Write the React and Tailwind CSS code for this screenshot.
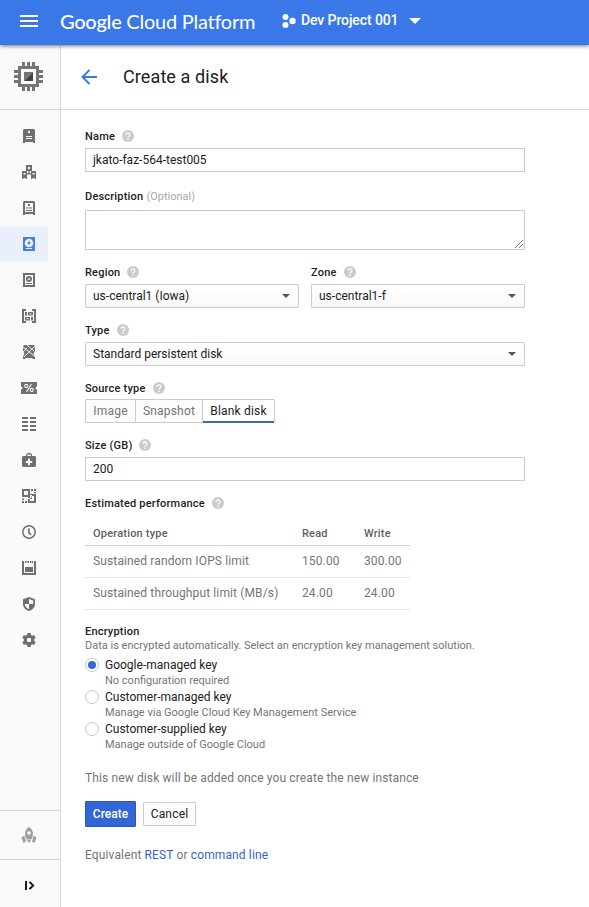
import React from "react";

const navIcons = [
  {
    name: "VM instances",
    art: (
      <path fillRule="evenodd" d="M2 0h10l1 1v13h-2v-1H3v1H1V1zM6 2v2h2V2zM4 7v1h6V7zM4 9v1h6V9z" />
    ),
  },
  {
    name: "Instance groups",
    art: (
      <path
        fillRule="evenodd"
        d="M4 0h6v6H7.600v2H9V6h5v8h-1.500v-1h-2v1H9V9.500H5V14H3.500v-1h-2v1H0V6h5v2h1.400V6H4zM6 2v2h2V2zM1.500 8v1.500h2V8zM10.500 8v1.500h2V8z"
      />
    ),
  },
  {
    name: "Instance templates",
    art: (
      <path
        fillRule="evenodd"
        d="M2 0h10l1 1v13h-2v-1H3v1H1V1zM3 2v9h8V2zM6 3h2v2H6zM4 6.500h6v1H4zM4 9h6v1H4z"
      />
    ),
  },
  {
    name: "Disks",
    active: true,
    art: (
      <path
        fillRule="evenodd"
        d="M1 0h12v14H1zM7 1.700a4.300 4.300 0 1 0 0 8.600 4.300 4.300 0 0 0 0-8.600zM7 4.600a1.400 1.400 0 1 1 0 2.800 1.400 1.400 0 0 1 0-2.800zM4 11v1h6v-1z"
      />
    ),
  },
  {
    name: "Snapshots",
    art: (
      <path
        fillRule="evenodd"
        d="M1 0h12v14H1zM3 2v10h8V2zM7 3a3 3 0 1 1 0 6 3 3 0 0 1 0-6zM7 5a1 1 0 1 0 0 2 1 1 0 0 0 0-2zM4 10h6v1H4z"
      />
    ),
  },
  {
    name: "Images",
    art: (
      <path
        fillRule="evenodd"
        d="M0 0h4v2H2v10h2v2H0zM10 0h4v14h-4v-2h2V2h-2zM3 3h2v3.500H3zM6 3h5v3.500H6zM7.500 4.200v1h2v-1zM3 8h5v3.500H3zM4.500 9.200v1h2v-1zM9 8h2v3.500H9z"
      />
    ),
  },
  {
    name: "TPUs",
    art: (
      <>
        <path d="M2 0h10l1 1v5l-1.500 2.500L13 12v2h-2l-1-1H4l-1 1H1v-2l1.500-3.500L1 6V1z" />
        <path d="M1 2l12 9.500M13 1L2 12M5 0l7 6M1 7l4-4" fill="none" stroke="#fafafa" strokeWidth="0.900" />
      </>
    ),
  },
  {
    name: "Committed use discounts",
    art: (
      <>
        <path d="M-1 1h16v4.500a1.500 1.500 0 0 0 0 3V13H-1V8.500a1.500 1.500 0 0 0 0-3z" />
        <g fill="none" stroke="#fafafa" strokeWidth="1.100">
          <circle cx="4.300" cy="5" r="1.600" />
          <circle cx="9.700" cy="9" r="1.600" />
          <path d="M9.500 3L4.500 11" />
        </g>
      </>
    ),
  },
  {
    name: "Metadata",
    art: <path d="M0 0h6v2H0zM8 0h6v2H8zM0 4h6v2H0zM8 4h6v2H8zM0 8h6v2H0zM8 8h6v2H8zM0 12h6v2H0zM8 12h6v2H8z" />,
  },
  {
    name: "Health checks",
    art: (
      <path
        fillRule="evenodd"
        d="M4 3V1.500L5.500 0h3L10 1.500V3h3l1 1v9l-1 1H1l-1-1V4l1-1zM5.300 3h3.400V1.500H5.300zM6 5.500V8H3.800v2H6v2.200h2V10h2.200V8H8V5.500z"
      />
    ),
  },
  {
    name: "Zones",
    art: (
      <path
        fillRule="evenodd"
        d="M0 0h8v5h6v9H6V8H0zM2 2v4h4V2zM8 7v5h4V7zM9 0h2v2H9zM12 0h2v2h-2zM12 3h2v1.200h-2zM0 9.500h2V11H0zM0 12h2v2H0zM3 12h2v2H3zM6 9h3.500V7H8V6h2v4H6z"
      />
    ),
  },
  {
    name: "Operations",
    art: (
      <g fill="none" stroke="currentColor">
        <circle cx="7" cy="7" r="6.200" strokeWidth="1.500" />
        <path d="M6.800 3.300V7.200L9 10" strokeWidth="1.700" />
      </g>
    ),
  },
  {
    name: "Quotas",
    art: <path d="M0 0h2v12h10V0h2v14H0zM3 6h8v5H3zM3 0h1.500v2H3zM5.500 0H7v2H5.500zM8 0h1.500v2H8zM10 0h1v2h-1z" />,
  },
  {
    name: "Security scans",
    art: (
      <path
        fillRule="evenodd"
        d="M7 0l6 2.300V7c0 3.300-2.500 6-6 7-3.500-1-6-3.700-6-7V2.300zM7 2v5H2.800c.3 2.500 2 4.500 4.200 5.300V7h4.200V3.500z"
      />
    ),
  },
  {
    name: "Settings",
    art: (
      <path
        fillRule="evenodd"
        d="M5.400 0h3.200l.4 2 1.200.7 1.900-.7 1.600 2.800L12.200 6.100v1.800l1.500 1.300-1.600 2.800-1.900-.7L9 12l-.4 2H5.400L5 12l-1.200-.7-1.900.7L.3 9.200l1.500-1.300V6.100L.3 4.800 1.900 2l1.900.7L5 2zM7 4.800a2.200 2.200 0 1 0 0 4.400 2.200 2.200 0 0 0 0-4.400z"
      />
    ),
  },
];

const keyOptions = [
  { title: "Google-managed key", hint: "No configuration required", checked: true },
  { title: "Customer-managed key", hint: "Manage via Google Cloud Key Management Service" },
  { title: "Customer-supplied key", hint: "Manage outside of Google Cloud" },
];

function Help() {
  return (
    <svg className="ml-[7px] h-3 w-3 shrink-0" viewBox="0 0 12 12">
      <circle cx="6" cy="6" r="6" fill="#cbcbcb" />
      <path d="M4.200 4.700a1.800 1.800 0 1 1 2.700 1.500C6.200 6.600 6 6.900 6 7.600" fill="none" stroke="#fff" strokeWidth="1.300" />
      <path d="M5.300 8.500h1.400v1.400H5.300z" fill="#fff" />
    </svg>
  );
}

function Label({ children, help, optional }) {
  return (
    <div className="flex h-4 items-center text-[11px] leading-4 font-medium tracking-[0.2px] text-[#212121]">
      <span className="pt-0.5">{children}</span>
      {optional && <span className="ml-[3px] pt-0.5 font-normal tracking-normal text-[#a8a8a8]">(Optional)</span>}
      {help && <Help />}
    </div>
  );
}

function Select({ value }) {
  return (
    <div className="mt-1 flex h-6 items-center justify-between rounded-[1px] border border-[#ccc] bg-linear-to-b from-white to-[#f8f8f8] pr-2 pl-[7px]">
      <span>{value}</span>
      <svg className="h-1 w-2" viewBox="0 0 8 4">
        <path d="M0 0h8L4 4z" fill="#555" />
      </svg>
    </div>
  );
}

function TopBar() {
  return (
    <header className="relative z-10 flex h-[45px] items-center bg-[#3b78e7] pb-1 pl-5 text-white shadow-[0_1px_4px_rgba(0,0,0,0.55)]">
      <svg className="h-3 w-[18px]" viewBox="0 0 18 12">
        <path d="M0 0h18v2H0zM0 5h18v2H0zM0 10h18v2H0z" fill="#fff" />
      </svg>
      <div className="ml-[22px] w-[214px] font-[Lato] text-[20px] leading-6 tracking-[-0.25px] whitespace-nowrap">
        <span className="font-medium">Google</span> Cloud Platform
      </div>
      <svg className="ml-[8px] h-[14px] w-[14px]" viewBox="0 0 14 14">
        <g fill="#fff">
          <circle cx="3.500" cy="3" r="3" />
          <circle cx="3.500" cy="11" r="3" />
          <circle cx="10.500" cy="7" r="3.200" />
        </g>
      </svg>
      <span className="ml-[5px] text-[14px] font-medium tracking-[-0.1px] whitespace-nowrap">Dev Project 001</span>
      <svg className="ml-[11px] h-[6px] w-3" viewBox="0 0 12 6">
        <path d="M0 0h12L6 6z" fill="#fff" />
      </svg>
    </header>
  );
}

function Sidebar() {
  return (
    <aside className="flex w-[61px] shrink-0 flex-col border-r border-[#d8d8d8] bg-[#fafafa]">
      <div className="flex h-[65px] items-center border-b border-[#d8d8d8] pb-[2px] pl-[14px]">
        <svg className="h-[29px] w-[29px]" viewBox="0 0 29 29" shapeRendering="crispEdges">
          <path
            fill="#757575"
            fillRule="evenodd"
            d="M4 4h21v21H4zM7 7v15h15V7zM8 0h3v4H8zM13 0h3v4h-3zM18 0h3v4h-3zM8 25h3v4H8zM13 25h3v4h-3zM18 25h3v4h-3zM0 8h4v3H0zM0 13h4v3H0zM0 18h4v3H0zM25 8h4v3h-4zM25 13h4v3h-4zM25 18h4v3h-4z"
          />
          <path d="M10 10h9v9h-9z" fill="#424242" />
          <path d="M10 10h9l-9 9z" fill="#757575" />
        </svg>
      </div>
      <nav className="flex flex-1 flex-col pt-2">
        {navIcons.map((item) => (
          <a
            key={item.name}
            className={
              item.active
                ? "flex h-9 w-12 items-center bg-[#e9f0fb] pl-[22px] text-[#4a7de0]"
                : "flex h-9 w-12 items-center pl-[22px] text-[#707070]"
            }
          >
            <svg className="h-[14px] w-[14px] overflow-visible" viewBox="0 0 14 14" fill="currentColor">
              {item.art}
            </svg>
          </a>
        ))}
      </nav>
      <div className="flex h-[49px] items-center border-t border-[#d8d8d8] pl-[21px]">
        <svg className="h-4 w-4" viewBox="0 0 16 16" fill="#9e9e9e">
          <path
            fillRule="evenodd"
            d="M8 0c2.500 1.500 4 4 4 6.500 0 2-.5 4-1.500 6h-5C4.500 10.500 4 8.500 4 6.500 4 4 5.500 1.500 8 0zM8 4.200a1.800 1.800 0 1 0 0 3.600 1.800 1.800 0 0 0 0-3.600z"
          />
          <path d="M6 13h4l-2 3zM3.300 8.500L5 14.500 2.500 16 .5 10.500zM12.700 8.500L11 14.500l2.500 1.500 2-5.500z" />
        </svg>
      </div>
      <div className="flex h-12 items-center border-t border-[#d8d8d8] pt-[3px] pl-[25px]">
        <svg className="h-[9px] w-[10px]" viewBox="0 0 10 9">
          <path d="M1 0v9M4.500 .8L8.200 4.500 4.500 8.200" fill="none" stroke="#111" strokeWidth="1.900" />
        </svg>
      </div>
    </aside>
  );
}

function Performance() {
  return (
    <table className="mt-[10px] w-[325px] table-fixed text-left tracking-[0.13px] text-[#757575]">
      <thead>
        <tr className="h-6 border-b border-[#d0d0d0] text-[11px] tracking-[0.2px] text-[#616161]">
          <th className="w-[209px] p-0 pt-[3px] pl-2 font-medium">Operation type</th>
          <th className="w-[62px] p-0 pt-[3px] pl-2 font-medium">Read</th>
          <th className="p-0 pt-[3px] pl-2 font-medium">Write</th>
        </tr>
      </thead>
      <tbody>
        <tr className="h-8 border-b border-[#e4e4e4]">
          <td className="p-0 pl-2">Sustained random IOPS limit</td>
          <td className="p-0 pl-2">150.00</td>
          <td className="p-0 pl-2">300.00</td>
        </tr>
        <tr className="h-8 border-b border-[#e4e4e4]">
          <td className="p-0 pl-2">Sustained throughput limit (MB/s)</td>
          <td className="p-0 pl-2">24.00</td>
          <td className="p-0 pl-2">24.00</td>
        </tr>
      </tbody>
    </table>
  );
}

function DiskForm() {
  return (
    <form className="w-[488px] px-6 pt-[18px]">
      <Label help>Name</Label>
      <div className="mt-1 flex h-6 items-center border border-[#ccc] pl-[7px]">jkato-faz-564-test005</div>

      <div className="mt-4">
        <Label optional>Description</Label>
        <div className="mt-[6px] flex h-10 items-end justify-end border border-[#ccc] p-px">
          <svg className="h-2 w-2" viewBox="0 0 8 8">
            <path d="M0 8L8 0M4 8l4-4" stroke="#666" strokeWidth="0.900" />
          </svg>
        </div>
      </div>

      <div className="mt-[14px] grid grid-cols-2 gap-3">
        <div>
          <Label help>Region</Label>
          <Select value="us-central1 (Iowa)" />
        </div>
        <div>
          <Label help>Zone</Label>
          <Select value="us-central1-f" />
        </div>
      </div>

      <div className="mt-[14px]">
        <Label help>Type</Label>
        <Select value="Standard persistent disk" />
      </div>

      <div className="mt-[14px]">
        <Label help>Source type</Label>
        <div className="mt-[3px] flex h-6 w-[190px] rounded-[1px] border border-[#ccc] tracking-[0.2px] text-[#757575]">
          <div className="flex w-[50px] items-center justify-center border-r border-[#ccc] bg-[#fcfcfc]">Image</div>
          <div className="flex w-[67px] items-center justify-center border-r border-[#ccc] bg-[#fcfcfc]">Snapshot</div>
          <div className="-mb-px flex flex-1 items-center justify-center border-b-2 border-[#3b68c4] text-[#212121]">
            Blank disk
          </div>
        </div>
      </div>

      <div className="mt-[14px]">
        <Label help>Size (GB)</Label>
        <div className="mt-1 flex h-6 items-center border border-[#ccc] pl-[7px]">200</div>
      </div>

      <div className="mt-[14px]">
        <Label help>Estimated performance</Label>
        <Performance />
      </div>

      <div className="mt-[13px]">
        <Label>Encryption</Label>
        <p className="-mt-px text-[11px] leading-[15px] whitespace-nowrap text-[#757575]">
          Data is encrypted automatically. Select an encryption key management solution.
        </p>
      </div>
      <div className="mt-1">
        {keyOptions.map((option) => (
          <div key={option.title} className="flex h-8">
            <span className="mt-[1px] mr-[6px] flex h-[14px] w-[14px] items-center justify-center rounded-full border border-[#c8c8c8]">
              {option.checked && <span className="h-2 w-2 rounded-full bg-[#3367d6]" />}
            </span>
            <div>
              <div className="leading-4">{option.title}</div>
              <div className="text-[11px] leading-[15px] text-[#757575]">{option.hint}</div>
            </div>
          </div>
        ))}
      </div>

      <p className="mt-[17px] leading-4 tracking-[0.12px] text-[#757575]">
        This new disk will be added once you create the new instance
      </p>
      <div className="mt-[15px] flex items-center gap-[7px]">
        <button
          type="button"
          className="h-[26px] w-[51px] rounded-[1px] border border-[#2a56c6] bg-[#3367d6] font-medium text-white"
        >
          Create
        </button>
        <button type="button" className="h-6 w-[53px] rounded-[1px] border border-[#ccc] bg-[#fcfcfc] tracking-[0.2px]">
          Cancel
        </button>
      </div>
      <p className="mt-5 leading-4 tracking-[0.13px] text-[#757575]">
        Equivalent <a className="text-[#3b62c0]">REST</a> or <a className="text-[#3b62c0]">command line</a>
      </p>
    </form>
  );
}

export default function App() {
  return (
    <div className="flex h-[907px] w-[589px] flex-col overflow-hidden bg-white font-[Roboto,sans-serif] text-[12px] text-[#212121]">
      <TopBar />
      <div className="flex min-h-0 flex-1">
        <Sidebar />
        <main className="flex-1">
          <div className="flex h-[65px] items-center border-b border-[#d8d8d8] pl-5">
            <svg className="h-4 w-4" viewBox="0 0 16 16">
              <path d="M16 8H1.500M8.500 1L1.500 8l7 7" fill="none" stroke="#3b78e7" strokeWidth="1.900" />
            </svg>
            <h1 className="ml-[26px] pb-0.5 text-[18px] tracking-[0.1px]">Create a disk</h1>
          </div>
          <DiskForm />
        </main>
      </div>
    </div>
  );
}
